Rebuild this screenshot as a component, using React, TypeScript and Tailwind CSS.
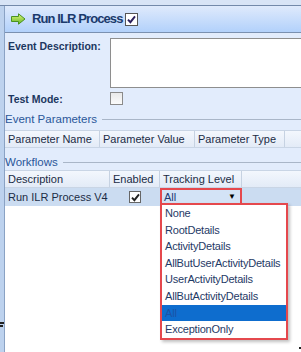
import React from 'react';

const items = [
  'None',
  'RootDetails',
  'ActivityDetails',
  'AllButUserActivityDetails',
  'UserActivityDetails',
  'AllButActivityDetails',
  'All',
  'ExceptionOnly',
];

const Arrow = () => (
  <svg width="15" height="12" viewBox="0 0 15 12">
    <defs>
      <linearGradient id="ag" x1="0" y1="0" x2="0" y2="1">
        <stop offset="0" stopColor="#e4f77a" />
        <stop offset="1" stopColor="#5fb526" />
      </linearGradient>
    </defs>
    <path d="M0.5 3.5 H7.5 V0.8 L14 6 L7.5 11.2 V8.5 H0.5 Z" fill="url(#ag)" stroke="#4a9220" strokeWidth="1" strokeLinejoin="round" />
  </svg>
);

const Check = ({ color = '#222' }: { color?: string }) => (
  <svg width="9" height="9" viewBox="0 0 9 9">
    <path d="M1 4.6 L3.4 7.2 L8 1.4" fill="none" stroke={color} strokeWidth="1.9" />
  </svg>
);

const HeaderCell = ({ w, children, last }: { w: string; children?: React.ReactNode; last?: boolean }) => (
  <div className={`${w} h-full flex items-center pl-[3px] whitespace-nowrap overflow-hidden ${last ? '' : 'border-r border-[#c6d2e2]'}`}>
    {children}
  </div>
);

const GroupTitle = ({ label }: { label: string }) => (
  <div className="h-[14px] flex items-center">
    <span className="text-[11.5px] leading-[14px] text-[#2a5799] whitespace-nowrap">{label}</span>
    <div className="flex-1 h-px bg-[#a9b6c8] ml-[5px]" />
  </div>
);

export default function App() {
  return (
    <div className="relative w-[301px] h-[352px] overflow-hidden bg-white font-['Liberation_Sans',Arial,sans-serif] text-[11px] text-[#1b2c45]">
      <div className="h-[6px] bg-[#d8e4f6] border-b border-[#7389aa]" />
      <div className="flex h-[346px]">
        <div className="w-[5px] shrink-0 bg-[#bdd2ee] border-r border-[#8aa2c4]" />
        <div className="flex-1 min-w-0 flex flex-col">
          {/* title bar */}
          <div className="h-[27px] shrink-0 flex items-center pl-[6px] bg-[linear-gradient(to_bottom,#dfeafc,#b2d1fb)] border-b border-[#7a90b0]">
            <Arrow />
            <span className="ml-[6px] text-[13px] font-bold tracking-[-0.9px] text-[#1b3a6c] whitespace-nowrap">Run ILR Process</span>
            <div className="ml-[2px] w-[13px] h-[13px] border border-[#555] bg-white flex items-center justify-center">
              <Check color="#2b1f5c" />
            </div>
          </div>

          <div className="bg-[#e2ecfc] flex flex-col">
            {/* form */}
            <div className="flex pt-[5px]">
              <div className="w-[105px] shrink-0 pl-[3px] pt-[1px] text-[10.5px] font-bold text-[#1c3760] whitespace-nowrap">Event Description:</div>
              <div className="flex-1 h-[50px] bg-white border border-r-0 border-[#8e8e8e]" />
            </div>
            <div className="flex h-[24px]">
              <div className="w-[105px] shrink-0 pl-[3px] pt-[4px] text-[10.5px] font-bold text-[#1c3760]">Test Mode:</div>
              <div className="pt-[4px]">
                <div className="w-[13px] h-[13px] border border-[#8a8a8a] bg-[linear-gradient(to_bottom,#e9e9e9,#fbfbfb)]" />
              </div>
            </div>

            <GroupTitle label="Event Parameters" />
            <div className="mt-[4px] h-[18px] flex bg-[linear-gradient(to_bottom,#f3f7fd,#e3ebf7)] border-y border-[#c9d5e5]">
              <HeaderCell w="w-[95px]">Parameter Name</HeaderCell>
              <HeaderCell w="w-[95px]">Parameter Value</HeaderCell>
              <HeaderCell w="w-[90px]">Parameter Type</HeaderCell>
              <HeaderCell w="flex-1" last />
            </div>
            <div className="h-[7px]" />
            <GroupTitle label="Workflows" />
            <div className="mt-[1px] h-[18px] flex bg-[linear-gradient(to_bottom,#f3f7fd,#e3ebf7)] border-y border-[#c9d5e5]">
              <HeaderCell w="w-[105px]">Description</HeaderCell>
              <HeaderCell w="w-[50px]">Enabled</HeaderCell>
              <HeaderCell w="w-[82px]">Tracking Level</HeaderCell>
              <HeaderCell w="flex-1" last />
            </div>
          </div>

          {/* data row */}
          <div className="h-[18px] shrink-0 flex items-center bg-[#cbdcf1]">
            <div className="w-[105px] pl-[3px] whitespace-nowrap">Run ILR Process V4</div>
            <div className="w-[50px] flex justify-center">
              <div className="w-[12px] h-[12px] border border-[#666] bg-white flex items-center justify-center">
                <Check />
              </div>
            </div>
            <div className="w-[82px] h-[18px] border-2 border-[#e5484d] flex items-center justify-between pl-[2px] pr-[4px] bg-[#d3e3f6]">
              <span className="text-[#1d3b73]">All</span>
              <span className="text-[8px] text-black">▼</span>
            </div>
          </div>
          <div className="flex-1 bg-white" />
        </div>
      </div>

      {/* open dropdown */}
      <div className="absolute left-[160px] top-[203px] w-[128px] border-2 border-[#e5484d] bg-white shadow-[2px_2px_3px_rgba(0,0,0,0.25)]">
        {items.map((it, i) => (
          <div
            key={it}
            className={`h-[16.6px] flex items-center pl-[3px] whitespace-nowrap text-[11px] tracking-[-0.2px] ${
              i === 6 ? 'bg-[#0e6dce] text-[#1b54a6]' : 'text-[#1f3a66]'
            }`}
          >
            {it}
          </div>
        ))}
      </div>

      {/* stray marks at the edges */}
      <div className="absolute left-0 top-[322px] w-[4px] h-[1.5px] bg-[#222]" />
      <div className="absolute left-0 top-[325px] w-[3px] h-[1.5px] bg-[#222]" />
      <div className="absolute right-0 top-[347px] w-[2px] h-[2px] bg-[#222]" />
    </div>
  );
}
